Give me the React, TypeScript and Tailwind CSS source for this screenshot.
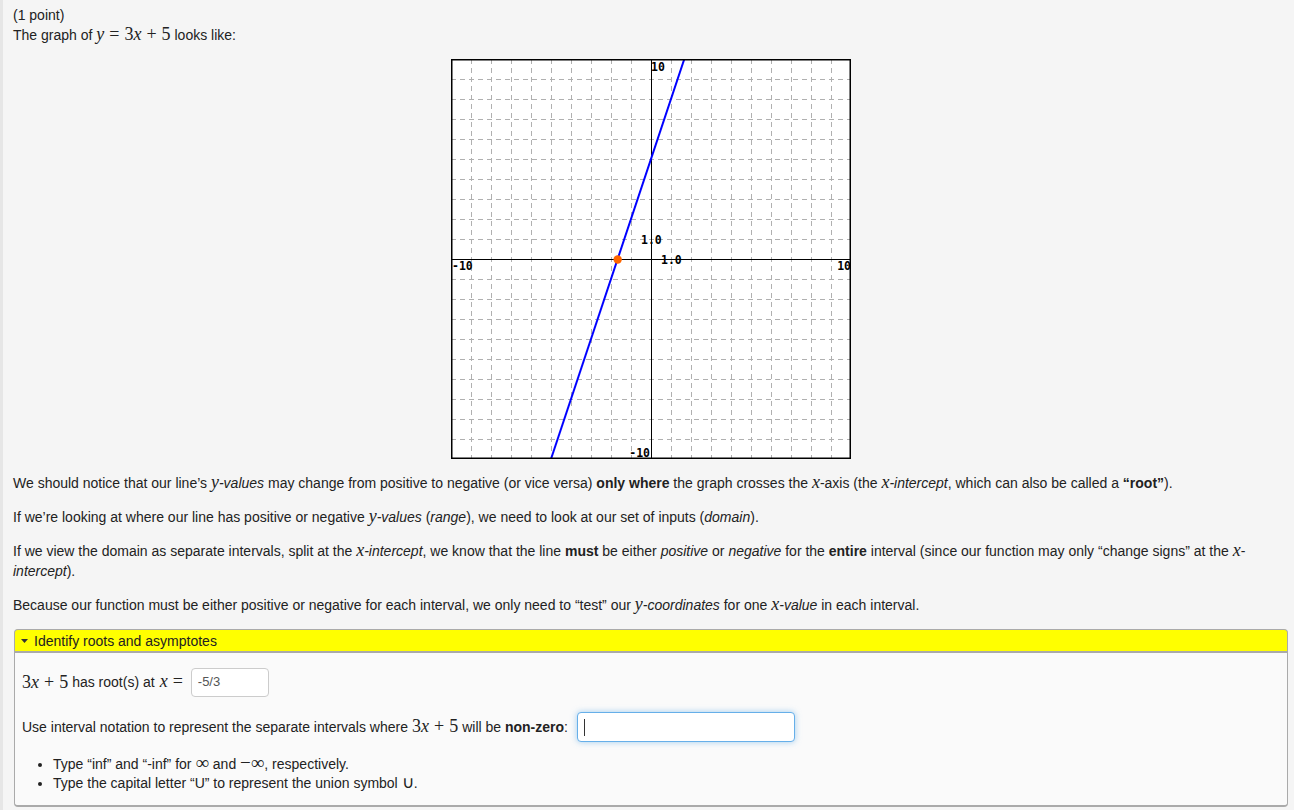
import React from "react";

const V = ({ children }: { children: React.ReactNode }) => (
  <span className="italic">{children}</span>
);
const Op = ({ children }: { children: React.ReactNode }) => (
  <span className="mx-[5px]">{children}</span>
);
const M = ({ children }: { children: React.ReactNode }) => (
  <span className="font-['Liberation_Serif','DejaVu_Serif',serif] text-[18px] leading-none">{children}</span>
);

function Graph() {
  const ticks = Array.from({ length: 19 }, (_, i) => (i + 1) * 20);
  return (
    <svg width="400" height="400" viewBox="0 0 400 400" className="block">
      <rect x="0" y="0" width="400" height="400" fill="#ffffff" />
      {ticks.map((t) => (
        <line key={"v" + t} x1={t + 0.5} y1="0" x2={t + 0.5} y2="400" stroke="#b0b0b0" strokeWidth="1" strokeDasharray="5 4" />
      ))}
      {ticks.map((t) => (
        <line key={"h" + t} x1="0" y1={t + 0.5} x2="400" y2={t + 0.5} stroke="#b0b0b0" strokeWidth="1" strokeDasharray="5 4" />
      ))}
      <g fontFamily="'DejaVu Sans Mono', monospace" fontWeight="bold" fontSize="11.5" fill="#000">
        <text x="200" y="11.5">10</text>
        <text x="1" y="211">-10</text>
        <text x="400" y="211" textAnchor="end">10</text>
        <text x="199" y="397.5" textAnchor="end">-10</text>
        <text x="190" y="185">1.0</text>
        <text x="210" y="205">1.0</text>
      </g>
      <line x1="200.5" y1="0" x2="200.5" y2="400" stroke="#000" strokeWidth="1" />
      <line x1="0" y1="200.5" x2="400" y2="200.5" stroke="#000" strokeWidth="1" />
      <line x1="100" y1="400" x2="233.33" y2="0" stroke="#0000ff" strokeWidth="2" />
      <circle cx="166.67" cy="200.5" r="4.2" fill="#ff6600" />
      <rect x="0.75" y="0.75" width="398.5" height="398.5" fill="none" stroke="#000" strokeWidth="1.5" />
    </svg>
  );
}

export default function App() {
  return (
    <div className="min-h-[810px] bg-[#f5f5f5] border-l-[3px] border-[#e6e6e6] pl-[10px] pr-[6px] pt-[5px] pb-[4px] font-['Liberation_Sans',Arial,sans-serif] text-[14px] leading-[20px] text-[#222]">
      <div>(1 point)</div>
      <div>
        The graph of{" "}
        <M>
          <V>y</V>
          <Op>=</Op>3<V>x</V>
          <Op>+</Op>5
        </M>{" "}
        looks like:
      </div>
      <div className="flex justify-center mt-[14px]">
        <Graph />
      </div>
      <p className="mt-[14px]">
        We should notice that our line’s <M><V>y</V></M><i>-values</i> may change from positive to negative (or vice versa){" "}
        <b>only where</b> the graph crosses the <M><V>x</V></M>-axis (the <M><V>x</V></M><i>-intercept</i>, which can also be called a{" "}
        <b>“root”</b>).
      </p>
      <p className="mt-[14px]">
        If we’re looking at where our line has positive or negative <M><V>y</V></M><i>-values</i> (<i>range</i>), we need to look at our set of
        inputs (<i>domain</i>).
      </p>
      <p className="mt-[14px]">
        If we view the domain as separate intervals, split at the <M><V>x</V></M><i>-intercept</i>, we know that the line <b>must</b> be either{" "}
        <i>positive</i> or <i>negative</i> for the <b>entire</b> interval (since our function may only “change signs” at the <M><V>x</V></M>-
        <i>intercept</i>).
      </p>
      <p className="mt-[14px]">
        Because our function must be either positive or negative for each interval, we only need to “test” our <M><V>y</V></M>
        <i>-coordinates</i> for one <M><V>x</V></M><i>-value</i> in each interval.
      </p>

      <div className="mt-[14px] ml-[1px]">
        <div className="flex items-center h-[24px] bg-[#ffff00] border border-b-2 border-[#aaaaaa] rounded-t-[4px] pl-[6px] text-[#222]">
          <svg width="7" height="4" viewBox="0 0 7 4" className="mr-[6px]">
            <path d="M0 0 L7 0 L3.5 4 Z" fill="#333" />
          </svg>
          <span>Identify roots and asymptotes</span>
        </div>
        <div className="bg-[#fafafa] border border-t-0 border-b-2 border-[#aaaaaa] rounded-b-[4px] pl-[7px] pt-[14px] pb-[12px]">
          <div className="flex items-center h-[30px]">
            <M>
              3<V>x</V>
              <Op>+</Op>5
            </M>
            <span className="ml-[4px]">has root(s) at</span>
            <span className="ml-[5px]">
              <M>
                <V>x</V>
                <Op>=</Op>
              </M>
            </span>
            <div className="ml-[3px] w-[78px] h-[29px] bg-white border border-[#cccccc] rounded-[4px] flex items-center pl-[6px] text-[13px] text-[#555]">
              -5/3
            </div>
          </div>
          <div className="flex items-center h-[30px] mt-[15px]">
            <span>Use interval notation to represent the separate intervals where</span>
            <span className="ml-[4px]">
              <M>
                3<V>x</V>
                <Op>+</Op>5
              </M>
            </span>
            <span className="ml-[4px]">
              will be <b>non-zero</b>:
            </span>
            <div className="ml-[9px] w-[218px] h-[30px] bg-white border border-[#66afe9] rounded-[4px] shadow-[0_0_6px_rgba(102,175,233,0.6)] flex items-center pl-[6px]">
              <span className="block w-px h-[17px] bg-[#333]" />
            </div>
          </div>
          <ul className="list-disc pl-[31px] mt-[13px] leading-[19px]">
            <li className="h-[19px]">
              Type “inf” and “-inf” for <span className="font-['Liberation_Serif',serif] text-[19px] leading-[0]">∞</span> and{" "}
              <span className="font-['Liberation_Serif',serif] text-[19px] leading-[0]">−∞</span>, respectively.
            </li>
            <li className="h-[19px]">
              Type the capital letter “U” to represent the union symbol{" "}
              <span className="font-['Liberation_Serif',serif] text-[17px] leading-[0]">∪</span>.
            </li>
          </ul>
        </div>
      </div>
    </div>
  );
}
